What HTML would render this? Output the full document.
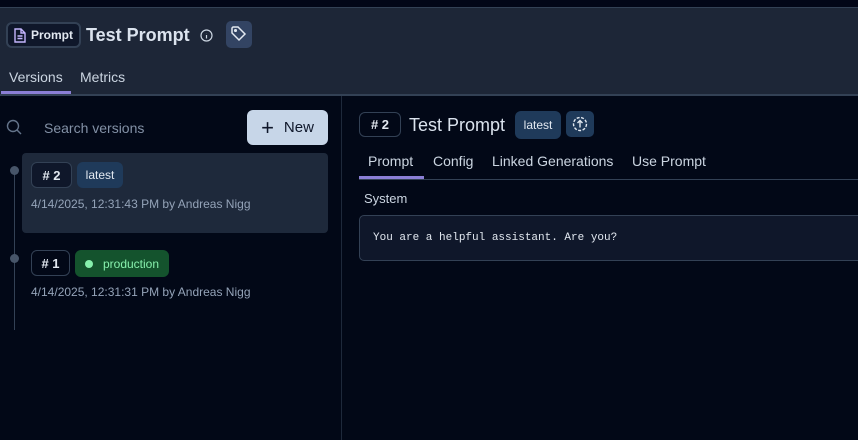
<!DOCTYPE html>
<html><head><style>
*{box-sizing:border-box;margin:0;padding:0}
body{width:858px;height:440px;background:#020817;font-family:"Liberation Sans",sans-serif;color:#e2e8f0;position:relative;overflow:hidden}
.a{position:absolute}
.hdr{left:0;top:7px;width:858px;height:89px;background:#1d2637;border-top:1px solid #334155;border-bottom:2px solid #334155}
.pill{border-radius:6px;display:flex;align-items:center;justify-content:center;font-size:13px}
</style></head><body>
<div class="a" style="left:0;top:0;width:858px;height:7px;background:#020617"></div>
<div class="a hdr"></div>
<div class="a pill" style="left:6px;top:22px;width:75px;height:26px;border:2px solid #334155;background:#0f172a;font-size:12px;font-weight:bold;gap:5px">
<svg width="12" height="15" viewBox="0 0 12 15" fill="none" stroke="#c4b5fd" stroke-width="1.4"><path d="M1 1h6l4 4v9H1z M7 1v4h4 M3.5 8h5 M3.5 10.5h5"/></svg>Prompt</div>
<div class="a" style="left:86px;top:25px;font-size:18px;font-weight:bold;color:#dbe3ee">Test Prompt</div>
<svg class="a" style="left:200px;top:29px" width="13" height="13" viewBox="0 0 13 13" fill="none" stroke="#cbd5e1" stroke-width="1.2"><circle cx="6.5" cy="6.5" r="5.5"/><path d="M6.5 6v3.5M6.5 4v.1"/></svg>
<div class="a" style="left:226px;top:21px;width:26px;height:27px;background:#334463;border-radius:5px"></div>
<svg class="a" style="left:230px;top:25px" width="18" height="18" viewBox="0 0 18 18" fill="none" stroke="#e2e8f0" stroke-width="1.5"><path d="M2 3v5l7 7 6-6-7-7H3z"/><circle cx="5.5" cy="5.5" r="0.8"/></svg>
<div class="a" style="left:9px;top:69px;font-size:14px;color:#cbd5e1">Versions</div>
<div class="a" style="left:80px;top:69px;font-size:14px;color:#cbd5e1">Metrics</div>
<div class="a" style="left:1px;top:91px;width:70px;height:3px;background:#8b7fd6"></div>
<div class="a" style="left:341px;top:96px;width:1px;height:344px;background:#1e293b"></div>
<svg class="a" style="left:6px;top:119px" width="16" height="16" viewBox="0 0 16 16" fill="none" stroke="#64748b" stroke-width="1.4"><circle cx="7" cy="7" r="5.5"/><path d="M11 11l4 4"/></svg>
<div class="a" style="left:44px;top:120px;font-size:14px;color:#8391a6">Search versions</div>
<div class="a pill" style="left:247px;top:110px;width:81px;height:35px;background:#c7d6e8;color:#0f172a;font-size:15px;gap:10px"><span style="font-size:22px;line-height:1">+</span>New</div>
<div class="a" style="left:14px;top:170px;width:1px;height:160px;background:#334155"></div>
<div class="a" style="left:10px;top:166px;width:9px;height:9px;border-radius:50%;background:#475569"></div>
<div class="a" style="left:10px;top:254px;width:9px;height:9px;border-radius:50%;background:#475569"></div>
<div class="a" style="left:22px;top:153px;width:306px;height:80px;background:#1e293b;border-radius:4px"></div>
<div class="a pill" style="left:31px;top:162px;width:41px;height:26px;border:1px solid #334155;background:#0f172a;font-weight:bold">#&nbsp;2</div>
<div class="a pill" style="left:77px;top:162px;width:46px;height:26px;background:#1f3a5a;font-size:12px">latest</div>
<div class="a" style="left:31px;top:197px;font-size:12px;color:#94a3b8">4/14/2025, 12:31:43 PM by Andreas Nigg</div>
<div class="a pill" style="left:31px;top:250px;width:39px;height:26px;border:1px solid #334155;font-weight:bold">#&nbsp;1</div>
<div class="a pill" style="left:75px;top:250px;width:94px;height:27px;background:#14532d;color:#86efac;font-size:12px;gap:10px"><span style="width:8px;height:8px;border-radius:50%;background:#86efac"></span>production</div>
<div class="a" style="left:31px;top:285px;font-size:12px;color:#94a3b8">4/14/2025, 12:31:31 PM by Andreas Nigg</div>
<div class="a pill" style="left:359px;top:112px;width:42px;height:25px;border:1px solid #334155;font-weight:bold">#&nbsp;2</div>
<div class="a" style="left:409px;top:115px;font-size:18px;color:#dbe3ee">Test Prompt</div>
<div class="a pill" style="left:515px;top:111px;width:46px;height:28px;background:#1f3a5a;font-size:12px">latest</div>
<div class="a" style="left:566px;top:111px;width:28px;height:26px;background:#1f3a5a;border-radius:5px"></div>
<svg class="a" style="left:571px;top:115px" width="18" height="18" viewBox="0 0 18 18" fill="none" stroke="#e2e8f0" stroke-width="1.4"><circle cx="9" cy="9" r="6.5" stroke-dasharray="3 1.5"/><path d="M9 12.5V5.5M6.5 8 9 5.5 11.5 8"/></svg>
<div class="a" style="left:368px;top:153px;font-size:14px;color:#cbd5e1">Prompt</div>
<div class="a" style="left:433px;top:153px;font-size:14px;color:#cbd5e1">Config</div>
<div class="a" style="left:492px;top:153px;font-size:14px;color:#cbd5e1">Linked Generations</div>
<div class="a" style="left:632px;top:153px;font-size:14px;color:#cbd5e1">Use Prompt</div>
<div class="a" style="left:359px;top:179px;width:499px;height:1px;background:#334155"></div>
<div class="a" style="left:359px;top:176px;width:65px;height:3px;background:#8b7fd6"></div>
<div class="a" style="left:364px;top:191px;font-size:13px;color:#cbd5e1">System</div>
<div class="a" style="left:359px;top:215px;width:510px;height:46px;background:#0f172a;border:1px solid #334155;border-radius:5px"></div>
<div class="a" style="left:373px;top:232px;font-family:'Liberation Mono',monospace;font-size:11px;color:#e2e8f0">You are a helpful assistant. Are you?</div>
</body></html>
